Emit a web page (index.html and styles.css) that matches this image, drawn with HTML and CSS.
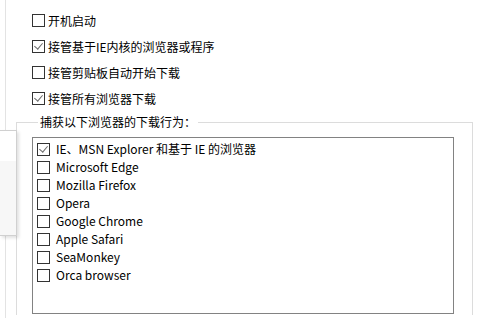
FILE: index.html
```html
<!DOCTYPE html>
<html>
<head>
<meta charset="utf-8">
<link rel="stylesheet" href="styles.css">
</head>
<body>
<div class="page">
  <div class="pane">
    <div class="options">
      <label class="opt"><span class="cb"></span><span>开机启动</span></label>
      <label class="opt"><span class="cb on"></span><span>接管基于IE内核的浏览器或程序</span></label>
      <label class="opt"><span class="cb"></span><span>接管剪贴板自动开始下载</span></label>
      <label class="opt"><span class="cb on"></span><span>接管所有浏览器下载</span></label>
    </div>
    <fieldset class="group">
      <legend>捕获以下浏览器的下载行为：</legend>
      <div class="list">
        <div class="item"><span class="cb on"></span><span>IE、MSN Explorer 和基于 IE 的浏览器</span></div>
        <div class="item"><span class="cb"></span><span>Microsoft Edge</span></div>
        <div class="item"><span class="cb"></span><span>Mozilla Firefox</span></div>
        <div class="item"><span class="cb"></span><span>Opera</span></div>
        <div class="item"><span class="cb"></span><span>Google Chrome</span></div>
        <div class="item"><span class="cb"></span><span>Apple Safari</span></div>
        <div class="item"><span class="cb"></span><span>SeaMonkey</span></div>
        <div class="item"><span class="cb"></span><span>Orca browser</span></div>
      </div>
    </fieldset>
  </div>
  <div class="popup"><div class="popup-top"></div></div>
</div>
</body>
</html>
```
FILE: styles.css
```css
html, body {
  margin: 0;
  padding: 0;
  background: #fff;
  overflow: hidden;
}
body {
  font-family: "Noto Sans CJK SC", "Liberation Sans", sans-serif;
  font-size: 12px;
  color: #000;
}
.page {
  position: relative;
  width: 479px;
  height: 318px;
  box-sizing: border-box;
  padding-left: 5px;
}
.pane {
  height: 318px;
  border-left: 1px solid #e3e3e3;
  box-sizing: border-box;
}
.options {
  display: flex;
  flex-direction: column;
  padding-top: 14px;
  padding-left: 26px;
  gap: 13px;
}
.opt {
  display: flex;
  align-items: center;
  height: 13px;
  gap: 3px;
  line-height: 13px;
}
.cb {
  flex: none;
  width: 11px;
  height: 11px;
  border: 1px solid #333;
  background: #fff;
  position: relative;
}
.cb.on::after {
  content: "";
  position: absolute;
  left: 3px;
  top: 0px;
  width: 4px;
  height: 7px;
  border-right: 1.3px solid #6b6b6b;
  border-bottom: 1.3px solid #6b6b6b;
  transform: rotate(40deg);
}
.group {
  margin: 10px 0 0 10px;
  width: 457px;
  box-sizing: border-box;
  border: 1px solid #dcdcdc;
  border-bottom: none;
  padding: 8px 18px 0 15px;
  height: 200px;
}
.group legend {
  padding: 0 2px;
  margin-left: 6px;
  line-height: 14px;
}
.list {
  border: 1px solid #828282;
  height: 177px;
  box-sizing: border-box;
  padding-top: 2px;
  padding-left: 4px;
}
.item {
  display: flex;
  align-items: center;
  height: 18px;
  gap: 6px;
  line-height: 18px;
}
.popup {
  position: absolute;
  left: 0;
  top: 130px;
  width: 17px;
  height: 106px;
  background: #f7f7f7;
  border: 1px solid #d0d0d0;
  border-left: none;
  box-sizing: border-box;
  box-shadow: 2px 2px 3px rgba(0,0,0,0.12);
}
.popup-top {
  height: 30px;
  background: #fff;
}
```
